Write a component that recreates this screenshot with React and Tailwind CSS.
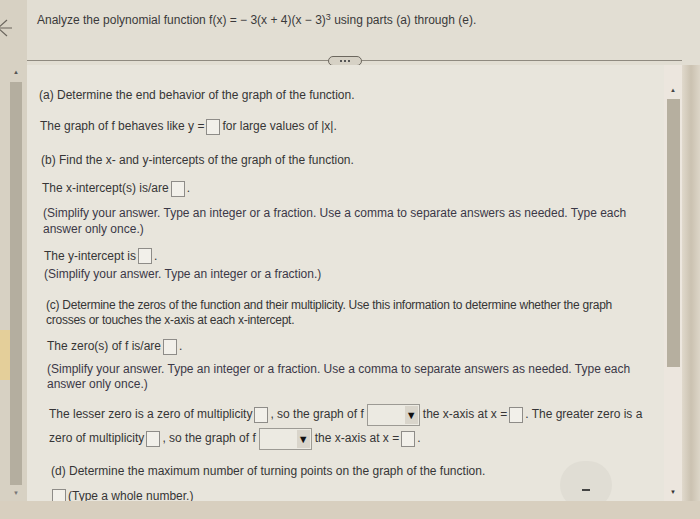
import React from 'react';

const Box = ({ className = '' }) => (
  <span className={`inline-block w-[14px] h-[16px] border border-[#8e8c88] bg-[#f2f0ea] align-middle mx-[2px] ${className}`} />
);

const Select = () => (
  <span className="inline-flex items-center justify-end w-[53px] h-[22px] border border-[#9c9a94] bg-[#eceae2] align-middle mx-[3px] pr-[1px]">
    <span className="flex items-center justify-center w-[13px] h-[18px] bg-[#d9d5cb] text-[11px] leading-none text-[#111]">▼</span>
  </span>
);

const Line = ({ className = '', children }) => (
  <div className={`leading-[16px] whitespace-nowrap ${className}`}>{children}</div>
);

export default function App() {
  return (
    <div className="w-[700px] h-[519px] flex flex-col bg-[#d9d2c3] overflow-hidden text-[12px] text-[#363536] font-['Liberation_Sans',Arial,sans-serif]">
      <div className="flex flex-1 min-h-0">
        {/* left strip */}
        <div className="w-[27px] flex flex-col bg-[#d7d1c3]">
          <div className="h-[62px] pt-[16px]">
            <svg width="14" height="26" viewBox="0 0 14 26" className="ml-[-2px]">
              <path d="M0 12 L14 12 M0 12 L9 4 M0 12 L9 20" stroke="#6a655d" strokeWidth="1.2" fill="none" />
            </svg>
          </div>
          <div className="flex-1 flex">
            <div className="w-[10px] flex flex-col">
              <div className="h-[268px]" />
              <div className="h-[50px] bg-[#e4cf9a]" />
            </div>
            <div className="w-[12px] flex flex-col items-center">
              <div className="h-[20px] flex items-center text-[6px] text-[#555]">▲</div>
              <div className="w-[12px] flex-1 bg-[#b4ae9f]" />
              <div className="h-[16px] flex items-center text-[6px] text-[#777]">▼</div>
            </div>
          </div>
        </div>

        {/* main */}
        <div className="flex-1 flex flex-col min-w-0">
          <div className="h-[56px] bg-[#e2ded3] pt-[11px] pl-[10px] text-[12px] text-[#3a393a] whitespace-nowrap">
            Analyze the polynomial function f(x) = − 3(x + 4)(x − 3)<sup className="text-[9px] relative top-[-4px]">3</sup> using parts (a) through (e).
          </div>
          <div className="h-[9px] flex items-center bg-[#e2ded3]">
            <div className="w-[301px] h-[1.5px] bg-[#8f8a80]" />
            <div className="w-[34px] h-[10px] rounded-full border border-[#6c675e] bg-[#d6d1c5] flex items-center justify-center gap-[2px]">
              <span className="w-[2px] h-[2px] bg-[#555]" />
              <span className="w-[2px] h-[2px] bg-[#555]" />
              <span className="w-[2px] h-[2px] bg-[#555]" />
            </div>
            <div className="flex-1 h-[1.5px] bg-[#8f8a80]" />
          </div>

          <div className="flex-1 flex min-h-0 bg-[#e8e5dc]">
            <div className="flex-1 overflow-hidden pt-[22px] relative">
              <Line className="pl-[12px]">(a) Determine the end behavior of the graph of the function.</Line>
              <Line className="pl-[13px] mt-[15px]">The graph of f behaves like y =<Box />for large values of |x|.</Line>
              <Line className="pl-[14px] mt-[17px]">(b) Find the x- and y-intercepts of the graph of the function.</Line>
              <Line className="pl-[15px] mt-[12px]">The x-intercept(s) is/are<Box />.</Line>
              <Line className="pl-[16px] mt-[8px] text-[#3b3847]">(Simplify your answer. Type an integer or a fraction. Use a comma to separate answers as needed. Type each<br />answer only once.)</Line>
              <Line className="pl-[17px] mt-[11px]">The y-intercept is<Box />.</Line>
              <Line className="pl-[17px] mt-[2px] text-[#3b3847]">(Simplify your answer. Type an integer or a fraction.)</Line>
              <div className="pl-[19px] mt-[16px] leading-[15px] whitespace-nowrap tracking-[-0.25px]">(c) Determine the zeros of the function and their multiplicity. Use this information to determine whether the graph<br />crosses or touches the x-axis at each x-intercept.</div>
              <Line className="pl-[20px] mt-[10px]">The zero(s) of f is/are<Box />.</Line>
              <div className="pl-[20px] mt-[7px] leading-[15px] whitespace-nowrap text-[#3b3847]">(Simplify your answer. Type an integer or a fraction. Use a comma to separate answers as needed. Type each<br />answer only once.)</div>
              <div className="pl-[22px] mt-[10px] leading-[24px] whitespace-nowrap">
                The lesser zero is a zero of multiplicity<Box />, so the graph of f<Select />the x-axis at x =<Box />. The greater zero is a
                <br />
                zero of multiplicity<Box />, so the graph of f<Select />the x-axis at x =<Box />.
              </div>
              <Line className="pl-[24px] mt-[13px]">(d) Determine the maximum number of turning points on the graph of the function.</Line>
              <Line className="pl-[25px] mt-[9px]"><Box className="ml-0" />(Type a whole number.)</Line>
              <div className="absolute left-[533px] top-[396px] w-[52px] h-[48px] rounded-full bg-[#e0ddd4]" />
              <div className="absolute left-[555px] top-[424px] w-[8px] h-[2px] bg-[#444]" />
            </div>

            {/* right scrollbar */}
            <div className="w-[18px] flex flex-col items-center bg-[#ece6de] pt-[22px] pb-[2px]">
              <div className="h-[12px] text-[6px] text-[#444] leading-none">▲</div>
              <div className="w-[13px] h-[268px] bg-[#b6af9f]" />
              <div className="flex-1" />
              <div className="h-[10px] text-[6px] text-[#333] leading-none">▼</div>
            </div>
          </div>
        </div>

        {/* right bezel */}
        <div className="w-[18px] flex flex-col">
          <div className="h-[65px] bg-[#e2ded3]" />
          <div className="flex-1 bg-gradient-to-r from-[#e0d9cc] via-[#cbc2b1] to-[#ddd6c8]" />
        </div>
      </div>
      <div className="h-[18px] bg-[#d8cfbf]" />
    </div>
  );
}
